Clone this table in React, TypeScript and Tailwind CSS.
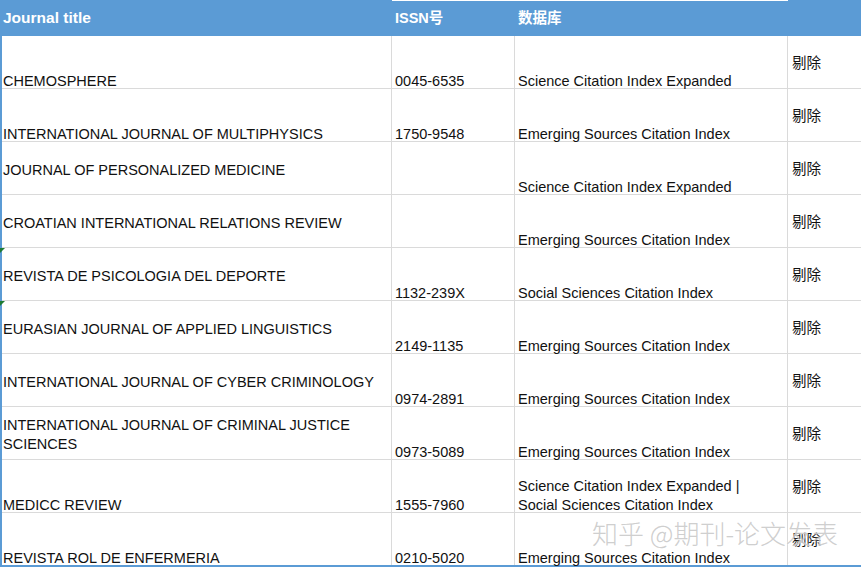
import React from 'react'

type Row = {
  title: React.ReactNode
  titleAlign: 'end' | 'center'
  issn: string
  db: React.ReactNode
  mark?: boolean
}

const rows: Row[] = [
  { title: 'CHEMOSPHERE', titleAlign: 'end', issn: '0045-6535', db: 'Science Citation Index Expanded' },
  { title: 'INTERNATIONAL JOURNAL OF MULTIPHYSICS', titleAlign: 'end', issn: '1750-9548', db: 'Emerging Sources Citation Index' },
  { title: 'JOURNAL OF PERSONALIZED MEDICINE', titleAlign: 'center', issn: '', db: 'Science Citation Index Expanded' },
  { title: 'CROATIAN INTERNATIONAL RELATIONS REVIEW', titleAlign: 'center', issn: '', db: 'Emerging Sources Citation Index' },
  { title: 'REVISTA DE PSICOLOGIA DEL DEPORTE', titleAlign: 'center', issn: '1132-239X', db: 'Social Sciences Citation Index', mark: true },
  { title: 'EURASIAN JOURNAL OF APPLIED LINGUISTICS', titleAlign: 'center', issn: '2149-1135', db: 'Emerging Sources Citation Index', mark: true },
  { title: 'INTERNATIONAL JOURNAL OF CYBER CRIMINOLOGY', titleAlign: 'center', issn: '0974-2891', db: 'Emerging Sources Citation Index' },
  {
    title: <>INTERNATIONAL JOURNAL OF CRIMINAL JUSTICE<br />SCIENCES</>,
    titleAlign: 'center',
    issn: '0973-5089',
    db: 'Emerging Sources Citation Index',
  },
  {
    title: 'MEDICC REVIEW',
    titleAlign: 'end',
    issn: '1555-7960',
    db: <>Science Citation Index Expanded |<br />Social Sciences Citation Index</>,
  },
  { title: 'REVISTA ROL DE ENFERMERIA', titleAlign: 'end', issn: '0210-5020', db: 'Emerging Sources Citation Index' },
]

const cjk = "font-['Liberation_Sans','Noto_Sans_CJK_SC',sans-serif]"

export default function App() {
  return (
    <div className={`relative w-[861px] h-[567px] overflow-hidden bg-white text-[#111] ${cjk}`}>
      {/* Header */}
      <div className="flex h-[36px] bg-[#5b9bd5] text-white font-bold">
        <div className="w-[392px] shrink-0 flex items-center pl-[3px] text-[15.5px]">Journal title</div>
        <div className="w-[123px] shrink-0 flex items-center pl-[3px] text-[14.5px] border-t border-white">ISSN号</div>
        <div className="w-[273px] shrink-0 flex items-center pl-[3px] text-[14.5px] border-t border-white">数据库</div>
        <div className="flex-1" />
      </div>

      {/* Body */}
      <div className="border-l-2 border-b-2 border-[#5b9bd5] text-[14.5px]">
        {rows.map((r, i) => {
          const last = i === rows.length - 1
          return (
            <div
              key={i}
              className={`relative flex ${last ? 'h-[52px]' : 'h-[53px] border-b border-[#dadada]'}`}
            >
              {r.mark && (
                <svg className="absolute -left-[2px] top-0" width="5" height="5" viewBox="0 0 5 5">
                  <polygon points="0,0 5,0 0,5" fill="#1e7b34" />
                </svg>
              )}
              <div
                className={`w-[390px] shrink-0 flex flex-col pl-px border-r border-[#dadada] ${
                  r.titleAlign === 'end' ? 'justify-end' : 'justify-center pt-[4px]'
                }`}
              >
                <div className={`leading-[19px] ${r.titleAlign === 'end' ? '-mb-[3px]' : ''}`}>{r.title}</div>
              </div>
              <div className="w-[123px] shrink-0 flex flex-col justify-end pl-[3px] border-r border-[#dadada]">
                <div className="leading-[19px] -mb-[3px]">{r.issn}</div>
              </div>
              <div className="w-[273px] shrink-0 flex flex-col justify-end pl-[3px] border-r border-[#dadada]">
                <div className="leading-[19px] -mb-[3px]">{r.db}</div>
              </div>
              <div className="flex-1 flex items-center pl-[4px] pt-[4px]">剔除</div>
            </div>
          )
        })}
      </div>

      {/* Watermark */}
      <div className="absolute left-[592px] top-[520px] text-[26px] leading-none font-light text-[#c2c2c2]/80 font-['Noto_Sans_CJK_SC',sans-serif] [text-shadow:0_0_2px_rgba(255,255,255,0.9)] whitespace-nowrap">
        知乎 @期刊-论文发表
      </div>
    </div>
  )
}
